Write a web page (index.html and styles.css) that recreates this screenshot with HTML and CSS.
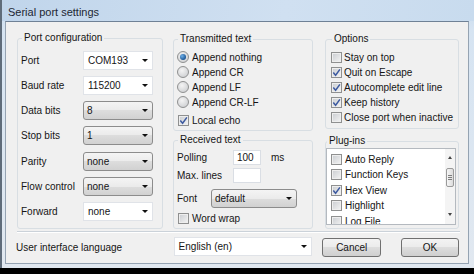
FILE: index.html
```html
<!DOCTYPE html>
<html lang="en">
<head>
    <meta charset="UTF-8">
    <meta name="viewport" content="width=device-width, initial-scale=1.0">
    <title>Serial port settings</title>
    <link rel="stylesheet" href="styles.css">
</head>
<body>
    <div class="window">
        <div class="titlebar">Serial port settings</div>
        <div class="frame">
            <div class="client">
                <div class="columns">
                    <!-- Left column -->
                    <fieldset class="group port-group">
                        <legend>Port configuration</legend>
                        <div class="form-grid">
                            <span>Port</span>
                            <div class="combo edit">COM193</div>
                            <span>Baud rate</span>
                            <div class="combo edit">115200</div>
                            <span>Data bits</span>
                            <div class="combo drop">8</div>
                            <span>Stop bits</span>
                            <div class="combo drop">1</div>
                            <span>Parity</span>
                            <div class="combo drop">none</div>
                            <span>Flow control</span>
                            <div class="combo drop">none</div>
                            <span>Forward</span>
                            <div class="combo edit">none</div>
                        </div>
                    </fieldset>

                    <!-- Middle column -->
                    <div class="col mid-col">
                        <fieldset class="group tx-group">
                            <legend>Transmitted text</legend>
                            <div class="row"><span class="radio on"></span>Append nothing</div>
                            <div class="row"><span class="radio"></span>Append CR</div>
                            <div class="row"><span class="radio"></span>Append LF</div>
                            <div class="row"><span class="radio"></span>Append CR-LF</div>
                            <div class="row echo-row"><span class="check on"><svg width="9" height="9" viewBox="0 0 9 9"><path d="M1.3 4.6 L3.6 7.2 L7.9 1.4"/></svg></span>Local echo</div>
                        </fieldset>
                        <fieldset class="group rx-group">
                            <legend>Received text</legend>
                            <div class="rx-row">
                                <span class="rx-label">Polling</span>
                                <div class="field">100</div>
                                <span class="unit">ms</span>
                            </div>
                            <div class="rx-row">
                                <span class="rx-label">Max. lines</span>
                                <div class="field"></div>
                            </div>
                            <div class="rx-row font-row">
                                <span class="font-label">Font</span>
                                <div class="combo drop font-combo">default</div>
                            </div>
                            <div class="row wrap-row"><span class="check"></span>Word wrap</div>
                        </fieldset>
                    </div>

                    <!-- Right column -->
                    <div class="col right-col">
                        <fieldset class="group options-group">
                            <legend>Options</legend>
                            <div class="row"><span class="check"></span>Stay on top</div>
                            <div class="row"><span class="check on"><svg width="9" height="9" viewBox="0 0 9 9"><path d="M1.3 4.6 L3.6 7.2 L7.9 1.4"/></svg></span>Quit on Escape</div>
                            <div class="row"><span class="check on"><svg width="9" height="9" viewBox="0 0 9 9"><path d="M1.3 4.6 L3.6 7.2 L7.9 1.4"/></svg></span>Autocomplete edit line</div>
                            <div class="row"><span class="check on"><svg width="9" height="9" viewBox="0 0 9 9"><path d="M1.3 4.6 L3.6 7.2 L7.9 1.4"/></svg></span>Keep history</div>
                            <div class="row"><span class="check"></span>Close port when inactive</div>
                        </fieldset>
                        <fieldset class="group plugins-group">
                            <legend>Plug-ins</legend>
                            <div class="listbox">
                                <div class="list-items">
                                    <div class="list-item"><span class="check"></span>Auto Reply</div>
                                    <div class="list-item"><span class="check"></span>Function Keys</div>
                                    <div class="list-item"><span class="check on"><svg width="9" height="9" viewBox="0 0 9 9"><path d="M1.3 4.6 L3.6 7.2 L7.9 1.4"/></svg></span>Hex View</div>
                                    <div class="list-item"><span class="check"></span>Highlight</div>
                                    <div class="list-item"><span class="check"></span>Log File</div>
                                </div>
                                <div class="scrollbar">
                                    <div class="sb-arrow up"></div>
                                    <div class="sb-thumb"></div>
                                    <div class="sb-space"></div>
                                    <div class="sb-arrow down"></div>
                                </div>
                            </div>
                        </fieldset>
                    </div>
                </div>

                <div class="separator"></div>

                <div class="bottom-row">
                    <span class="lang-label">User interface language</span>
                    <div class="combo edit lang-combo">English (en)</div>
                    <div class="btn cancel-btn">Cancel</div>
                    <div class="btn ok-btn">OK</div>
                </div>
            </div>
        </div>
    </div>
</body>
</html>
```

FILE: styles.css
```css
/* General Styles */
* {
    margin: 0;
    padding: 0;
    box-sizing: border-box;
}

body {
    background-color: #000;
    font-family: "Liberation Sans", Arial, sans-serif;
    font-size: 10px;
    color: #151515;
    width: 474px;
    height: 274px;
    overflow: hidden;
}

/* Window frame */
.window {
    width: 474px;
    height: 268px;
    display: flex;
    flex-direction: column;
    border-left: 2px solid #5f6c7a;
    background: linear-gradient(#c6d9ed, #d6e4f2 30px, #e1e8f0);
}

.titlebar {
    height: 21px;
    padding: 2px 0 0 6px;
    display: flex;
    align-items: center;
    font-size: 11px;
    color: #1d2733;
    background: linear-gradient(100deg, #c0d5eb, #d0e0f1 60%, #c8dbee);
}

.frame {
    flex: 1;
    padding: 0 5px 4px 3px;
}

.client {
    height: 243px;
    border: 1px solid #95a3b2;
    border-top-color: #6f8196;
    background-color: #f0f0f0;
    padding: 10px 9px 6px 11px;
    display: flex;
    flex-direction: column;
}

.columns {
    display: flex;
    height: 197px;
}

/* Group boxes */
.group {
    border: 1px solid #d8dee3;
    border-radius: 3px;
    min-width: 0;
}

.group legend {
    margin-left: 1px;
    padding: 0 2px;
    line-height: 12px;
}

.port-group {
    width: 146px;
    padding: 6.5px 9px 0 3px;
}

.form-grid {
    display: grid;
    grid-template-columns: 62px 70px;
    grid-auto-rows: 19px;
    row-gap: 6.33px;
    align-items: center;
}

.col {
    display: flex;
    flex-direction: column;
    padding-top: 1px;
}

.mid-col {
    width: 140px;
    margin-left: 10px;
}

.right-col {
    width: 134px;
    margin-left: 12px;
}

.tx-group {
    height: 98px;
    padding: 4.5px 3px 0 3px;
}

.rx-group {
    height: 95px;
    margin-top: 3px;
    padding: 4px 3px 0 3px;
}

.options-group {
    height: 96px;
    padding: 4.5px 3px 0 5px;
}

.plugins-group {
    height: 94px;
    margin-top: 6px;
    padding: 1px 2px 3px 0;
}

/* Rows with radios / checks */
.row {
    height: 15px;
    display: flex;
    align-items: center;
    gap: 3px;
    white-space: nowrap;
}

.options-group .row {
    gap: 2px;
}

.echo-row {
    margin-top: 3.5px;
}

.echo-row .check,
.wrap-row .check {
    margin-left: 1px;
}

.wrap-row {
    margin-top: 4px;
    height: 12px;
}

/* Received text rows */
.rx-row {
    display: flex;
    align-items: center;
    height: 15px;
}

.rx-row + .rx-row {
    margin-top: 3px;
}

.rx-label {
    width: 56px;
}

.field {
    width: 28px;
    height: 15px;
    background-color: #fff;
    border: 1px solid #dadee4;
    padding-left: 3px;
    line-height: 13px;
}

.unit {
    margin-left: 10px;
}

.rx-row.font-row {
    height: 20px;
    margin-top: 5px;
}

.font-label {
    width: 34px;
}

.font-combo {
    width: 86px;
    height: 20px;
}

/* Combos */
.combo {
    height: 19px;
    display: flex;
    align-items: center;
    justify-content: space-between;
    white-space: nowrap;
}

.combo::after {
    content: "";
    border-left: 3px solid transparent;
    border-right: 3px solid transparent;
    border-top: 3.5px solid #111;
}

.combo.edit {
    background-color: #fff;
    border: 1px solid #e0e3e8;
    padding: 0 4px 0 4px;
}

.combo.drop {
    border: 1px solid #8c8c8c;
    border-radius: 3px;
    padding: 0 4px 0 3px;
    background: linear-gradient(#f4f4f4, #ebebeb 50%, #dddddd 50%, #d1d1d1);
}

/* Radio buttons & checkboxes */
.radio {
    width: 12px;
    height: 12px;
    flex: none;
    border-radius: 50%;
    border: 1px solid #8f9090;
    background: radial-gradient(circle at 40% 35%, #f4f4f4, #c6c8cb);
    display: flex;
    align-items: center;
    justify-content: center;
}

.radio.on::after {
    content: "";
    width: 6px;
    height: 6px;
    border-radius: 50%;
    background: radial-gradient(circle at 35% 35%, #6eb0e8, #114a8a 80%);
}

.check {
    width: 11px;
    height: 11px;
    flex: none;
    border: 1px solid #8f9090;
    background: linear-gradient(135deg, #c9ccd0, #f4f4f4);
    box-shadow: inset 0 0 0 1px #eeeeee;
    display: flex;
    align-items: center;
    justify-content: center;
}

.check svg path {
    fill: none;
    stroke: #3d5aa0;
    stroke-width: 1.5;
}

/* Plug-ins list */
.listbox {
    height: 77px;
    border: 1px solid #b4b9bf;
    background-color: #fff;
    display: flex;
    overflow: hidden;
}

.list-items {
    flex: 1;
    padding: 2.25px 0 0 4px;
}

.list-item {
    height: 15.5px;
    display: flex;
    align-items: center;
    gap: 3px;
    white-space: nowrap;
}

.scrollbar {
    width: 10px;
    display: flex;
    flex-direction: column;
    background-color: #f4f4f4;
}

.sb-arrow {
    display: flex;
    align-items: center;
    justify-content: center;
}

.sb-arrow.up {
    height: 17px;
}

.sb-arrow.down {
    height: 20px;
}

.sb-arrow.up::after {
    content: "";
    border-left: 2.5px solid transparent;
    border-right: 2.5px solid transparent;
    border-bottom: 3px solid #444;
}

.sb-arrow.down::after {
    content: "";
    border-left: 2.5px solid transparent;
    border-right: 2.5px solid transparent;
    border-top: 3px solid #444;
}

.sb-thumb {
    height: 19px;
    margin: 2px 1px 0 1px;
    border: 1px solid #9a9a9a;
    border-radius: 2px;
    background: linear-gradient(90deg, #f6f6f6, #dcdcdc);
    display: flex;
    align-items: center;
    justify-content: center;
}

.sb-thumb::after {
    content: "";
    width: 4px;
    height: 5px;
    background: repeating-linear-gradient(#7d7d7d 0 1px, transparent 1px 2px);
}

.sb-space {
    flex: 1;
}

/* Bottom */
.separator {
    margin: 2px -1px 0 0;
    border-top: 1px solid #cbd2d9;
    border-bottom: 1px solid #fff;
}

.bottom-row {
    margin-top: 4px;
    height: 20px;
    display: flex;
}

.lang-label {
    width: 158px;
    margin-left: -1px;
    align-self: center;
}

.lang-combo {
    width: 139px;
    align-self: flex-start;
}

.btn {
    height: 19px;
    align-self: flex-end;
    border: 1px solid #707070;
    border-radius: 3px;
    background: linear-gradient(#f3f3f3, #ebebeb 50%, #dddddd 50%, #cfcfcf);
    display: flex;
    align-items: center;
    justify-content: center;
}

.cancel-btn {
    width: 59px;
    margin-left: 10px;
}

.ok-btn {
    width: 58px;
    margin-left: 20px;
}
```
